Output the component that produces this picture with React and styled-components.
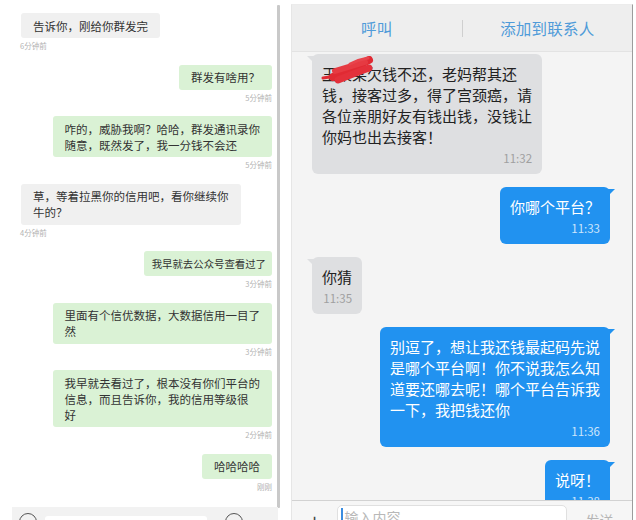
import React from "react";
import styled, { createGlobalStyle } from "styled-components";

const Global = createGlobalStyle`
  html, body { margin: 0; padding: 0; background: #ffffff; }
  body { font-family: "Noto Sans CJK SC", "Noto Sans", sans-serif; }
`;

const Page = styled.div`
  width: 636px;
  height: 520px;
  overflow: hidden;
  display: flex;
  background: #fff;
`;

/* ---------- Left (WeChat-like) ---------- */
const LeftPanel = styled.div`
  width: 283px;
  flex: none;
  display: flex;
  flex-direction: column;
  background: #fff;
`;

const LeftTop = styled.div`
  height: 507px;
  flex: none;
  display: flex;
  gap: 5px;
`;

const LeftMessages = styled.div`
  width: 251px;
  padding: 13px 0 0 21px;
  display: flex;
  flex-direction: column;
`;

const Scroll = styled.div`
  width: 2.5px;
  margin-top: 5px;
  height: 503px;
  background: #c9c9c9;
  border-radius: 1px;
`;

const LMsg = styled.div`
  display: flex;
  flex-direction: column;
  align-items: ${(p) => (p.$me ? "flex-end" : "flex-start")};
  margin-bottom: 13.5px;
`;

const LBubble = styled.div`
  max-width: 220px;
  box-sizing: border-box;
  padding: ${(p) => (p.$small ? "4.5px 6px 4.5px 8px" : "4.5px 12px")};
  background: ${(p) => (p.$me ? "#daf2d5" : "#f0f0f0")};
  color: #333;
  font-size: ${(p) => (p.$small ? "10.4px" : "11.5px")};
  line-height: 16px;
  border-radius: 3px;
  white-space: nowrap;
`;

const LTime = styled.div`
  margin-top: 3px;
  font-size: 7.5px;
  line-height: 10px;
  color: #b3b3b3;
  margin-left: ${(p) => (p.$me ? "0" : "-1px")};
`;

const LeftBar = styled.div`
  margin-left: 12px;
  width: 266px;
  height: 40px;
  background: #f2f2f2;
  display: flex;
  align-items: flex-start;
  padding-top: 6px;
  box-sizing: border-box;
  gap: 8px;
`;

const RoundIcon = styled.div`
  width: 18px;
  height: 18px;
  border: 1.5px solid #555;
  border-radius: 50%;
  margin-left: ${(p) => p.$ml || "0"};
  box-sizing: border-box;
  flex: none;
`;

const LeftField = styled.div`
  width: 162px;
  height: 26px;
  margin-top: 3px;
  background: #fff;
  border-radius: 3px;
  flex: none;
`;

/* ---------- Right (SMS-like) ---------- */
const RightPanel = styled.div`
  margin-left: 8px;
  margin-top: 4px;
  width: 340px;
  height: 520px;
  flex: none;
  display: flex;
  flex-direction: column;
  background: #f4f4f4;
  border-left: 1px solid #e6e6e6;
  border-right: 1.5px solid #9c9c9c;
  border-top: 1px solid #ececec;
`;

const Header = styled.div`
  height: 46px;
  flex: none;
  display: flex;
  align-items: center;
  background: #eeeeee;
  border-bottom: 1px solid #e3e3e3;
`;

const HeaderItem = styled.div`
  flex: 1;
  text-align: center;
  color: #4f9bd9;
  font-size: 15.5px;
  letter-spacing: 0.2px;
`;

const HeaderDivider = styled.div`
  width: 1px;
  height: 17px;
  background: #cfcfcf;
`;

const Chat = styled.div`
  height: 448px;
  flex: none;
  overflow: hidden;
  box-sizing: border-box;
  padding: 2px 22px 0 20px;
  display: flex;
  flex-direction: column;
  gap: 13px;
`;

const RBubble = styled.div`
  position: relative;
  align-self: ${(p) => (p.$me ? "flex-end" : "flex-start")};
  padding: 9px 10px 9px 10px;
  background: ${(p) => (p.$me ? "#2192f0" : "#dedfe1")};
  color: ${(p) => (p.$me ? "#ffffff" : "#222")};
  font-size: 15px;
  line-height: 21px;
  border-radius: 6px;
  white-space: nowrap;

  &::before {
    content: "";
    position: absolute;
    top: 2px;
    ${(p) => (p.$me ? "right: -5px;" : "left: -5px;")}
    width: 7px;
    height: 7px;
    background: ${(p) => (p.$me ? "#2192f0" : "#dedfe1")};
    clip-path: ${(p) =>
      p.$me
        ? "polygon(0 0, 100% 0, 0 100%)"
        : "polygon(0 0, 100% 0, 100% 100%)"};
  }
`;

const RTime = styled.div`
  margin-top: 4px;
  text-align: right;
  font-size: 11.5px;
  line-height: 14px;
  color: ${(p) => (p.$me ? "#cde5fb" : "#a0a0a0")};
`;

const Scribble = styled.svg`
  position: absolute;
  left: 8px;
  top: 2px;
`;

const InputBar = styled.div`
  flex: none;
  height: 44px;
  background: #f6f6f6;
  border-top: 1px solid #d2d2d2;
  display: flex;
  align-items: flex-start;
  padding-top: 4px;
  box-sizing: border-box;
`;

const Plus = styled.div`
  width: 45px;
  flex: none;
  text-align: center;
  font-size: 20px;
  line-height: 20px;
  color: #444;
  margin-top: 6px;
`;

const Field = styled.div`
  width: 230px;
  height: 30px;
  flex: none;
  background: #fff;
  border: 1px solid #e0e0e0;
  border-radius: 5px;
  box-sizing: border-box;
  display: flex;
  align-items: flex-start;
  padding: 2px 0 0 3px;
  font-size: 14px;
  line-height: 18px;
  color: #b8b8b8;
`;

const Caret = styled.span`
  width: 1.5px;
  height: 18px;
  background: #3b8de0;
  margin-right: 2px;
`;

const Send = styled.div`
  flex: 1;
  text-align: center;
  font-size: 14px;
  line-height: 18px;
  color: #b5b5b5;
  margin-top: 6px;
`;

const leftMessages = [
  { me: false, lines: ["告诉你，刚给你群发完"], t: "6分钟前" },
  { me: true, lines: ["群发有啥用？"], t: "5分钟前" },
  {
    me: true,
    lines: ["咋的，威胁我啊？哈哈，群发通讯录你", "随意，既然发了，我一分钱不会还"],
    t: "5分钟前",
  },
  {
    me: false,
    lines: ["草，等着拉黑你的信用吧，看你继续你", "牛的？"],
    t: "4分钟前",
  },
  { me: true, small: true, lines: ["我早就去公众号查看过了"], t: "3分钟前" },
  {
    me: true,
    lines: ["里面有个信优数据，大数据信用一目了", "然"],
    t: "3分钟前",
  },
  {
    me: true,
    lines: [
      "我早就去看过了，根本没有你们平台的",
      "信息，而且告诉你，我的信用等级很",
      "好",
    ],
    t: "2分钟前",
  },
  { me: true, lines: ["哈哈哈哈"], t: "刚刚" },
];

const rightMessages = [
  {
    me: false,
    redact: true,
    lines: [
      "王某某欠钱不还，老妈帮其还",
      "钱，接客过多，得了宫颈癌，请",
      "各位亲朋好友有钱出钱，没钱让",
      "你妈也出去接客！",
    ],
    t: "11:32",
  },
  { me: true, lines: ["你哪个平台？"], t: "11:33" },
  { me: false, lines: ["你猜"], t: "11:35" },
  {
    me: true,
    lines: [
      "别逗了，想让我还钱最起码先说",
      "是哪个平台啊！你不说我怎么知",
      "道要还哪去呢！哪个平台告诉我",
      "一下，我把钱还你",
    ],
    t: "11:36",
  },
  { me: true, lines: ["说呀！"], t: "11:38" },
];

const Lines = ({ lines }) =>
  lines.map((l, i) => (
    <React.Fragment key={i}>
      {l}
      {i < lines.length - 1 && <br />}
    </React.Fragment>
  ));

export default function App() {
  return (
    <>
      <Global />
      <Page>
        <LeftPanel>
          <LeftTop>
            <LeftMessages>
              {leftMessages.map((m, i) => (
                <LMsg key={i} $me={m.me}>
                  <LBubble $me={m.me} $small={m.small}>
                    <Lines lines={m.lines} />
                  </LBubble>
                  <LTime $me={m.me}>{m.t}</LTime>
                </LMsg>
              ))}
            </LeftMessages>
            <Scroll />
          </LeftTop>
          <LeftBar>
            <RoundIcon $ml="7px" />
            <LeftField />
            <RoundIcon $ml="10px" />
          </LeftBar>
        </LeftPanel>

        <RightPanel>
          <Header>
            <HeaderItem>呼叫</HeaderItem>
            <HeaderDivider />
            <HeaderItem>添加到联系人</HeaderItem>
          </Header>
          <Chat>
            {rightMessages.map((m, i) => (
              <RBubble key={i} $me={m.me}>
                <Lines lines={m.lines} />
                <RTime $me={m.me}>{m.t}</RTime>
                {m.redact && (
                  <Scribble width="54" height="28" viewBox="0 0 54 28">
                    <path
                      d="M3 22 L16 20"
                      stroke="#e02a33"
                      strokeWidth="3"
                      fill="none"
                      strokeLinecap="round"
                    />
                    <path
                      d="M13 21 C23 17 35 11 49 4"
                      stroke="#e02a33"
                      strokeWidth="8"
                      fill="none"
                      strokeLinecap="round"
                    />
                    <path
                      d="M18 24 C28 20 38 16 49 12"
                      stroke="#e3303a"
                      strokeWidth="7"
                      fill="none"
                      strokeLinecap="round"
                    />
                    <path
                      d="M15 15 C25 12 35 9 45 6"
                      stroke="#e63a42"
                      strokeWidth="6"
                      fill="none"
                      strokeLinecap="round"
                    />
                    <path
                      d="M30 8 C36 5 42 3 48 2"
                      stroke="#e8434b"
                      strokeWidth="3"
                      fill="none"
                      strokeLinecap="round"
                    />
                  </Scribble>
                )}
              </RBubble>
            ))}
          </Chat>
          <InputBar>
            <Plus>+</Plus>
            <Field>
              <Caret />
              输入内容
            </Field>
            <Send>发送</Send>
          </InputBar>
        </RightPanel>
      </Page>
    </>
  );
}
